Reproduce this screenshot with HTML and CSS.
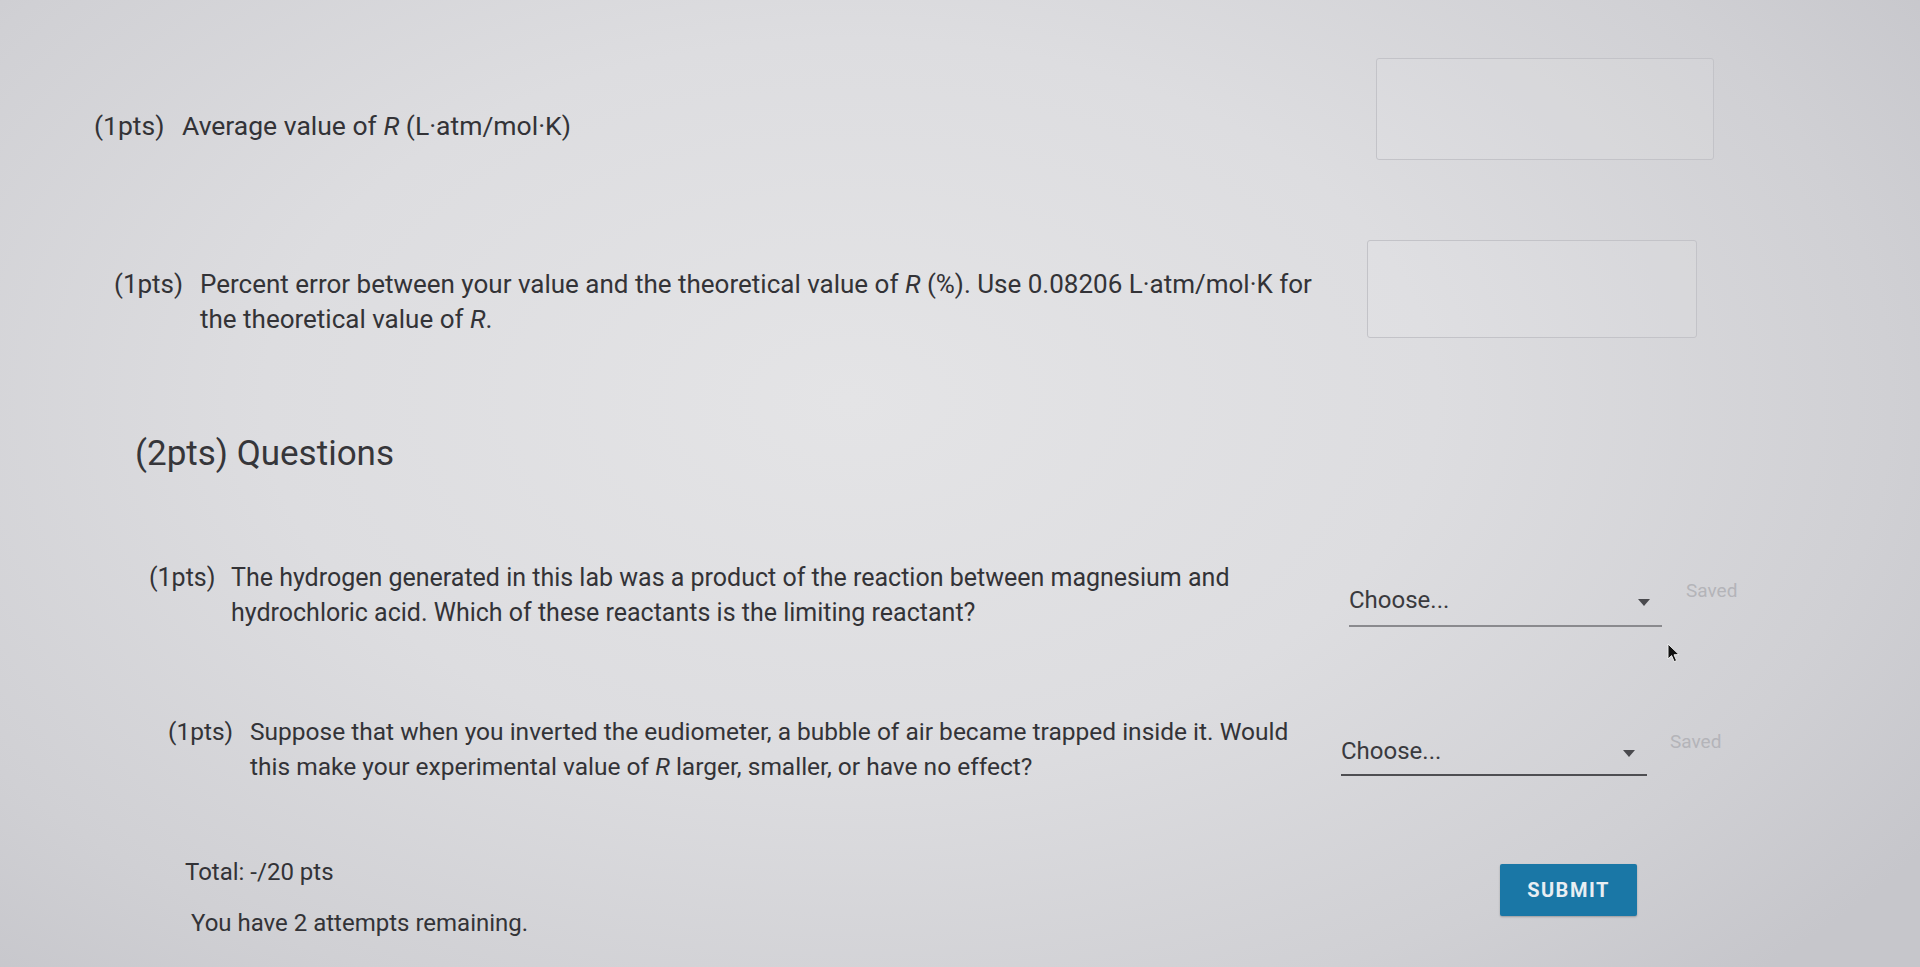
FILE: index.html
```html
<!DOCTYPE html>
<html lang="en">
<head>
<meta charset="utf-8">
<title>Questions</title>
<link rel="stylesheet" href="styles.css">
</head>
<body>
<main class="page">
  <section class="row row-1">
    <div class="question q-1">
      <span class="pts">(1pts)</span>
      <div class="qbody">Average value of <i>R</i> (L·atm/mol·K)</div>
    </div>
    <div class="answer-box box-1"></div>
  </section>

  <section class="row row-2">
    <div class="question q-2">
      <span class="pts">(1pts)</span>
      <div class="qbody body-2">Percent error between your value and the theoretical value of <i>R</i> (%). Use 0.08206 L·atm/mol·K for the theoretical value of <i>R</i>.</div>
    </div>
    <div class="answer-box box-2"></div>
  </section>

  <h2 class="group-title">(2pts) Questions</h2>

  <section class="row row-3">
    <div class="question q-3">
      <span class="pts">(1pts)</span>
      <div class="qbody body-3">The hydrogen generated in this lab was a product of the reaction between magnesium and hydrochloric acid. Which of these reactants is the limiting reactant?</div>
    </div>
    <div class="select sel-3">
      <span class="select-label">Choose...</span>
      <svg class="caret" width="12" height="7" viewBox="0 0 12 7"><path d="M0 0 L12 0 L6 7 Z" fill="#4a4a4e"/></svg>
    </div>
    <span class="saved saved-3">Saved</span>
  </section>

  <section class="row row-4">
    <div class="question q-4">
      <span class="pts">(1pts)</span>
      <div class="qbody body-4">Suppose that when you inverted the eudiometer, a bubble of air became trapped inside it. Would this make your experimental value of <i>R</i> larger, smaller, or have no effect?</div>
    </div>
    <div class="select sel-4">
      <span class="select-label">Choose...</span>
      <svg class="caret" width="12" height="7" viewBox="0 0 12 7"><path d="M0 0 L12 0 L6 7 Z" fill="#4a4a4e"/></svg>
    </div>
    <span class="saved saved-4">Saved</span>
  </section>

  <footer class="footer">
    <div class="footer-text">
      <p class="total">Total: -/20 pts</p>
      <p class="attempts">You have 2 attempts remaining.</p>
    </div>
    <button class="submit" type="button">SUBMIT</button>
  </footer>
</main>
<svg class="cursor" width="14" height="20" viewBox="0 0 14 20"><path d="M1 1 L1 16 L4.6 12.6 L7.2 18.6 L9.6 17.6 L7 11.8 L12 11.6 Z" fill="#111" stroke="#eee" stroke-width="1"/></svg>
</body>
</html>
```
FILE: styles.css
```css
html, body {
  margin: 0;
  padding: 0;
}
body {
  width: 1920px;
  height: 967px;
  overflow: hidden;
  font-family: Roboto, "Liberation Sans", Arial, sans-serif;
  color: #333337;
  background: radial-gradient(ellipse 1300px 800px at 850px 400px, #e4e4e6 0%, #dddde0 45%, #d0d0d4 80%, #c6c6cb 100%);
  position: relative;
}
.page {
  display: flex;
  flex-direction: column;
}
.row {
  display: flex;
  align-items: flex-start;
}
.question {
  display: flex;
  align-items: flex-start;
  font-size: 25px;
  line-height: 35px;
}
.pts {
  flex: none;
  width: 88px;
}
.qbody i {
  font-style: italic;
}
.row-1 {
  margin-top: 58px;
  padding-left: 94px;
}
.q-1 {
  width: 1282px;
  margin-top: 50px;
  font-size: 26.5px;
}
.row-2 {
  margin-top: 80px;
  padding-left: 114px;
}
.q-2 {
  width: 1253px;
  margin-top: 27px;
  font-size: 26px;
}
.q-2 .pts { width: 86px; }
.body-2 { max-width: 1140px; }
.answer-box {
  border: 1px solid #c3c3c8;
  border-radius: 3px;
  background: rgba(255,255,255,0.07);
  box-sizing: border-box;
}
.box-1 { width: 338px; height: 102px; }
.box-2 { width: 330px; height: 98px; }

.group-title {
  margin: 95px 0 0 0;
  padding-left: 135px;
  font-size: 35px;
  line-height: 42px;
  font-weight: 400;
  color: #36363a;
}
.row-3 {
  margin-top: 85px;
  padding-left: 149px;
}
.q-3 {
  width: 1200px;
  font-size: 25px;
}
.q-3 .pts, .q-4 .pts { width: 82px; }
.body-3 { max-width: 1040px; }
.row-4 {
  margin-top: 84px;
  padding-left: 168px;
}
.q-4 {
  width: 1173px;
  font-size: 24.5px;
}
.body-4 { max-width: 1060px; }

.select {
  display: flex;
  align-items: center;
  justify-content: space-between;
  box-sizing: border-box;
  font-size: 24px;
  line-height: 35px;
  color: #3a3a3e;
  border-bottom: 2px solid #6a6a6e;
  padding-right: 12px;
}
.sel-3 { width: 313px; margin-top: 23px; padding-bottom: 7px; border-bottom-color: #8a8a8e; }
.sel-4 { width: 306px; margin-top: 20px; padding-bottom: 5px; border-bottom-color: #4e4e52; }
.caret { margin-top: 4px; }
.saved {
  font-size: 19px;
  line-height: 20px;
  color: #b4b4b9;
  margin-left: 24px;
}
.saved-3 { margin-top: 21px; }
.saved-4 { margin-top: 18px; margin-left: 23px; }

.footer {
  display: flex;
  align-items: flex-start;
  margin-top: 71px;
  padding-left: 185px;
}
.footer-text {
  width: 1315px;
  font-size: 24px;
  line-height: 35px;
}
.footer-text p { margin: 0; }
.attempts {
  margin-top: 16px !important;
  padding-left: 6px;
}
.submit {
  margin-top: 9px;
  width: 137px;
  height: 52px;
  border: none;
  border-radius: 2px;
  background: #1a77a6;
  color: #e8eef3;
  font-family: Roboto, "Liberation Sans", Arial, sans-serif;
  font-weight: 700;
  font-size: 20px;
  letter-spacing: 1.5px;
  box-shadow: 0 1px 2px rgba(0,0,0,0.25);
}
.cursor {
  position: absolute;
  left: 1667px;
  top: 643px;
}
```
